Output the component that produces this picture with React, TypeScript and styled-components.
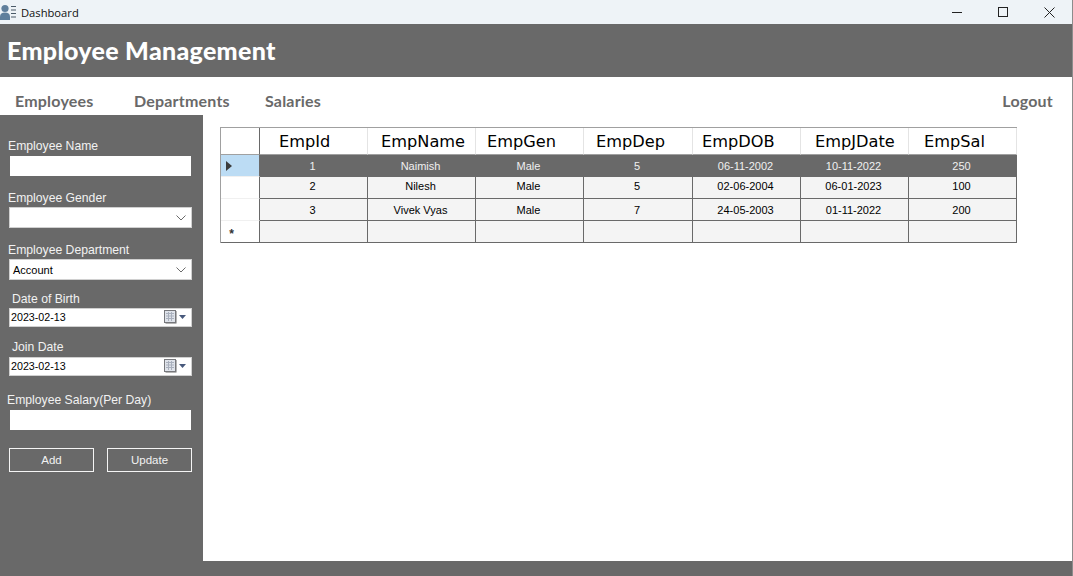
import React from 'react'
import styled, { createGlobalStyle } from 'styled-components'

const GRAY = '#696969'

const GlobalStyle = createGlobalStyle`
  html, body {
    margin: 0;
    padding: 0;
    background: #fff;
  }
  * {
    box-sizing: border-box;
  }
`

const columns = [
  { name: 'EmpId', width: 108, pad: 19 },
  { name: 'EmpName', width: 108, pad: 13 },
  { name: 'EmpGen', width: 108, pad: 11 },
  { name: 'EmpDep', width: 109, pad: 12 },
  { name: 'EmpDOB', width: 108, pad: 9 },
  { name: 'EmpJDate', width: 108, pad: 14 },
  { name: 'EmpSal', width: 108, pad: 15 },
]

const rows = [
  { cells: ['1', 'Naimish', 'Male', '5', '06-11-2002', '10-11-2022', '250'], selected: true },
  { cells: ['2', 'Nilesh', 'Male', '5', '02-06-2004', '06-01-2023', '100'], lift: 4 },
  { cells: ['3', 'Vivek Vyas', 'Male', '7', '24-05-2003', '01-11-2022', '200'] },
  { cells: ['', '', '', '', '', '', ''], isNew: true },
]

function AppIcon() {
  return (
    <svg width="18" height="16" viewBox="0 0 18 16">
      <circle cx="5" cy="4.5" r="3.6" fill="#5f7f9c" />
      <path d="M0 16v-3.5C0 10 2 8.6 5 8.6s5 1.4 5 3.9V16z" fill="#5f7f9c" />
      <path d="M11 2.5h5M11 6h5M11 9.500h5M11 13h5" stroke="#4a5a68" strokeWidth="1.2" />
    </svg>
  )
}

function CalendarIcon() {
  return (
    <svg width="22" height="14" viewBox="0 0 22 14">
      <rect x="0.500" y="0.500" width="11" height="12" fill="#dfe3ea" stroke="#77787c" />
      <path d="M2 3.500h8M2 6h8M2 8.500h8M4.500 2v9M7.500 2v9" stroke="#a9b0bd" />
      <path d="M12.500 13.500h-11M12.500 1v12" stroke="#b5b5b5" />
      <path d="M15 5h7l-3.500 4z" fill="#47597c" />
    </svg>
  )
}

function Chevron() {
  return (
    <svg width="10" height="6" viewBox="0 0 10 6">
      <path d="M0.500 0.500L5 5l4.500-4.500" fill="none" stroke="#6b6b6b" />
    </svg>
  )
}

export default function App() {
  return (
    <>
      <GlobalStyle />
      <Window>
        <TitleBar>
          <AppIcon />
          <TitleText>Dashboard</TitleText>
          <WindowControls>
            <ControlButton>
              <svg width="10" height="10" viewBox="0 0 10 10">
                <path d="M0 5.500h10" stroke="#222" />
              </svg>
            </ControlButton>
            <ControlButton>
              <svg width="10" height="10" viewBox="0 0 10 10">
                <rect x="0.500" y="0.500" width="9" height="9" fill="none" stroke="#222" />
              </svg>
            </ControlButton>
            <ControlButton>
              <svg width="11" height="11" viewBox="0 0 11 11">
                <path d="M0.500 0.500l10 10M10.500 0.500l-10 10" stroke="#222" />
              </svg>
            </ControlButton>
          </WindowControls>
        </TitleBar>

        <Banner>Employee Management</Banner>

        <NavBar>
          <NavLink $width={119}>Employees</NavLink>
          <NavLink $width={131}>Departments</NavLink>
          <NavLink>Salaries</NavLink>
          <LogoutLink>Logout</LogoutLink>
        </NavBar>

        <Main>
          <Sidebar>
            <Field $top={23}>
              <FieldLabel $indent={8} $gap={2}>Employee Name</FieldLabel>
              <TextBox />
            </Field>
            <Field $top={14}>
              <FieldLabel $indent={8} $gap={1}>Employee Gender</FieldLabel>
              <SelectBox>
                <span />
                <Chevron />
              </SelectBox>
            </Field>
            <Field $top={14}>
              <FieldLabel $indent={8} $gap={1}>Employee Department</FieldLabel>
              <SelectBox>
                <span>Account</span>
                <Chevron />
              </SelectBox>
            </Field>
            <Field $top={11}>
              <FieldLabel $indent={12} $gap={1}>Date of Birth</FieldLabel>
              <DateBox>
                <span>2023-02-13</span>
                <CalendarIcon />
              </DateBox>
            </Field>
            <Field $top={12}>
              <FieldLabel $indent={12} $gap={2}>Join Date</FieldLabel>
              <DateBox>
                <span>2023-02-13</span>
                <CalendarIcon />
              </DateBox>
            </Field>
            <Field $top={16}>
              <FieldLabel $indent={7} $gap={2}>Employee Salary(Per Day)</FieldLabel>
              <TextBox />
            </Field>
            <ButtonRow>
              <OutlineButton>Add</OutlineButton>
              <OutlineButton>Update</OutlineButton>
            </ButtonRow>
          </Sidebar>

          <GridArea>
            <DataGrid>
              <colgroup>
                <col width={39} />
                {columns.map((c) => (
                  <col key={c.name} width={c.width} />
                ))}
              </colgroup>
              <thead>
                <tr>
                  <CornerCell />
                  {columns.map((c) => (
                    <HeaderCell key={c.name} $pad={c.pad}>
                      {c.name}
                    </HeaderCell>
                  ))}
                </tr>
              </thead>
              <tbody>
                {rows.map((row, i) => (
                  <GridRow key={i}>
                    <RowHeader $selected={row.selected} $last={row.isNew}>
                      {row.selected && <RowArrow />}
                      {row.isNew && <NewMark>*</NewMark>}
                    </RowHeader>
                    {row.cells.map((cell, j) => (
                      <DataCell key={j} $selected={row.selected} $lift={row.lift}>
                        {cell}
                      </DataCell>
                    ))}
                  </GridRow>
                ))}
              </tbody>
            </DataGrid>
          </GridArea>
        </Main>

        <BottomBar />
      </Window>
    </>
  )
}

const Window = styled.div`
  width: 1073px;
  height: 576px;
  display: flex;
  flex-direction: column;
  overflow: hidden;
  background: #fff;
  border-right: 1px solid #8c8c8c;
`

const TitleBar = styled.div`
  height: 24px;
  flex: none;
  display: flex;
  align-items: center;
  background: #eef3f7;
`

const TitleText = styled.span`
  margin-left: 3px;
  font: 11.2px 'Open Sans', 'Liberation Sans', sans-serif;
  color: #111;
`

const WindowControls = styled.div`
  margin-left: auto;
  display: flex;
  align-items: center;
`

const ControlButton = styled.div`
  width: 46px;
  height: 24px;
  display: flex;
  align-items: center;
  justify-content: center;
`

const Banner = styled.div`
  height: 53px;
  flex: none;
  padding: 0 0 2px 7px;
  display: flex;
  align-items: center;
  background: ${GRAY};
  color: #fff;
  font: 900 25px Lato, 'Open Sans', sans-serif;
  letter-spacing: 0.3px;
`

const NavBar = styled.div`
  height: 38px;
  flex: none;
  padding: 8px 19px 0 15px;
  display: flex;
  align-items: center;
`

const NavLink = styled.span<{ $width?: number }>`
  width: ${(p) => (p.$width ? `${p.$width}px` : 'auto')};
  color: ${GRAY};
  font: 700 16px Lato, 'Open Sans', sans-serif;
  letter-spacing: 0.2px;
`

const LogoutLink = styled(NavLink)`
  margin-left: auto;
`

const Main = styled.div`
  flex: 1;
  min-height: 0;
  display: flex;
`

const Sidebar = styled.div`
  width: 203px;
  flex: none;
  background: ${GRAY};
`

const Field = styled.div<{ $top: number }>`
  margin-top: ${(p) => p.$top}px;
`

const FieldLabel = styled.div<{ $indent: number; $gap: number }>`
  height: 16px;
  margin-left: ${(p) => p.$indent}px;
  margin-bottom: ${(p) => p.$gap}px;
  color: #f2f2f2;
  font: 12.2px/16px 'Liberation Sans', Arial, sans-serif;
  white-space: nowrap;
`

const TextBox = styled.div`
  width: 181px;
  height: 20px;
  margin-left: 10px;
  background: #fff;
`

const SelectBox = styled.div`
  width: 183px;
  height: 21px;
  margin-left: 9px;
  padding: 0 5px 0 3px;
  display: flex;
  align-items: center;
  justify-content: space-between;
  background: #fff;
  border: 1px solid #d0d0d0;
  color: #000;
  font: 11px 'Liberation Sans', Arial, sans-serif;
`

const DateBox = styled.div`
  width: 183px;
  height: 19px;
  margin-left: 9px;
  padding: 0 5px 1px 1px;
  display: flex;
  align-items: center;
  justify-content: space-between;
  background: #fff;
  border: 1px solid #d0d0d0;
  color: #000;
  font: 10.7px 'Liberation Sans', Arial, sans-serif;
`

const ButtonRow = styled.div`
  width: 183px;
  margin: 18px 0 0 9px;
  display: flex;
  justify-content: space-between;
`

const OutlineButton = styled.div`
  width: 85px;
  height: 24px;
  display: flex;
  align-items: center;
  justify-content: center;
  border: 1px solid #f5f5f5;
  color: #f2f2f2;
  font: 11.5px 'Liberation Sans', Arial, sans-serif;
`

const GridArea = styled.div`
  flex: 1;
  padding: 12px 0 0 17px;
`

const DataGrid = styled.table`
  width: 797px;
  table-layout: fixed;
  border-collapse: separate;
  border-spacing: 0;
  border-top: 1px solid #a0a0a0;
  border-left: 1px solid #a0a0a0;
`

const CornerCell = styled.th`
  height: 27px;
  padding: 0;
  background: #fff;
  border-right: 1px solid #696969;
  border-bottom: 1px solid #a0a0a0;
`

const HeaderCell = styled.th<{ $pad: number }>`
  height: 27px;
  padding: 0 0 0 ${(p) => p.$pad}px;
  text-align: left;
  background: #fff;
  border-right: 1px solid #e4e4e4;
  border-bottom: 1px solid #a0a0a0;
  color: #000;
  font: 400 16.2px 'DejaVu Sans', Verdana, sans-serif;
  white-space: nowrap;
`

const GridRow = styled.tr`
  height: 22px;
`

const RowHeader = styled.th<{ $selected?: boolean; $last?: boolean }>`
  padding: 0;
  background: ${(p) => (p.$selected ? '#bcdcf4' : '#fff')};
  border-right: 1px solid #696969;
  border-bottom: 1px solid ${(p) => (p.$last ? '#696969' : '#f0f0f0')};
`

const RowArrow = styled.span`
  display: block;
  width: 0;
  height: 0;
  margin-left: 5px;
  border-left: 6px solid #3c3c3c;
  border-top: 5px solid transparent;
  border-bottom: 5px solid transparent;
`

const NewMark = styled.span`
  display: block;
  margin: 4px 0 0 -17px;
  color: #333;
  font: 700 12px/14px 'Liberation Sans', Arial, sans-serif;
`

const DataCell = styled.td<{ $selected?: boolean; $lift?: number }>`
  padding: 0 2px ${(p) => p.$lift ?? 0}px 0;
  text-align: center;
  background: ${(p) => (p.$selected ? GRAY : '#f4f4f4')};
  color: ${(p) => (p.$selected ? '#f0f0f0' : '#000')};
  border-right: 1px solid ${(p) => (p.$selected ? GRAY : '#696969')};
  border-bottom: 1px solid ${(p) => (p.$selected ? GRAY : '#696969')};
  font: 11px 'Liberation Sans', Arial, sans-serif;
`

const BottomBar = styled.div`
  height: 15px;
  flex: none;
  background: ${GRAY};
`
